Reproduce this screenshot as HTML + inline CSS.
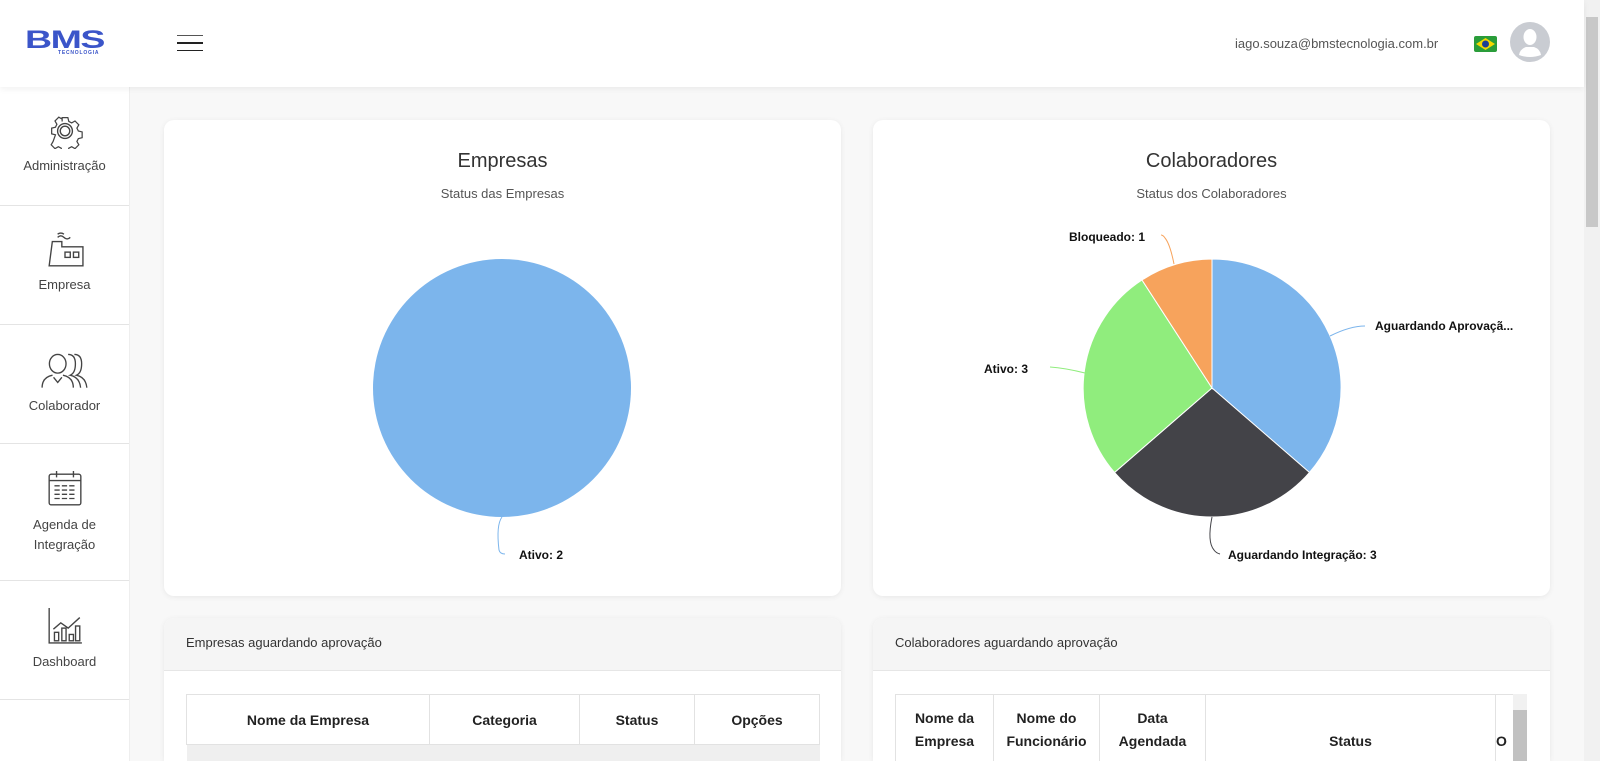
<!DOCTYPE html>
<html style="width:1600px;height:761px;overflow:hidden"><head><meta charset="utf-8"><style>
*{box-sizing:border-box;margin:0;padding:0}
body{width:1600px;height:761px;overflow:hidden;background:#f8f8f8;font-family:"Liberation Sans","DejaVu Sans",sans-serif;position:relative;color:#333}
.hdr{position:absolute;left:0;top:0;width:1584px;height:87px;background:#fff;box-shadow:0 2px 6px rgba(0,0,0,.06);z-index:2}
.side{position:absolute;left:0;top:87px;width:130px;height:674px;background:#fff;border-right:1px solid #eee}
.item{height:119px;border-bottom:1px solid #e4e4e4;text-align:center;font-size:13px;color:#444;padding-top:26px}
.item svg{display:block;margin:0 auto 9px}
.card{position:absolute;background:#fff;border-radius:10px;box-shadow:0 1px 6px rgba(0,0,0,.07)}
.t{position:absolute;width:100%;text-align:center}
.scroll{position:absolute;left:1584px;top:0;width:16px;height:761px;background:#f1f1f1}
.thumb{position:absolute;left:1586px;top:17px;width:12px;height:210px;background:#c8c8c8}
table{border-collapse:collapse;font-size:14px;font-weight:bold;color:#222}
td{border:1px solid #e2e2e2;text-align:center}
</style></head><body>
<div class="hdr">
 <div style="position:absolute;left:25px;top:26px;color:#3b55c9;font-weight:bold;font-size:25px;letter-spacing:-1px;transform:scaleX(1.5);transform-origin:left">BMS</div>
 <div style="position:absolute;left:58px;top:50px;color:#3b55c9;font-size:5px;font-weight:bold;letter-spacing:.8px">TECNOLOGIA</div>
 <div style="position:absolute;left:177px;top:35px;width:26px;height:1px;background:#555"></div>
 <div style="position:absolute;left:177px;top:42px;width:26px;height:2px;background:#222"></div>
 <div style="position:absolute;left:177px;top:50px;width:26px;height:1px;background:#222"></div>
 <div style="position:absolute;left:1235px;top:36px;font-size:13px;color:#555">iago.souza@bmstecnologia.com.br</div>
 <svg style="position:absolute;left:1474px;top:36px" width="23" height="16"><rect width="23" height="16" rx="2" fill="#2a9d3a"/><path d="M11.5 2 L21 8 L11.5 14 L2 8Z" fill="#f5d800"/><circle cx="11.5" cy="8" r="3.5" fill="#1c3f94"/></svg>
 <svg style="position:absolute;left:1510px;top:22px" width="40" height="40"><circle cx="20" cy="20" r="20" fill="#c9ccd2"/><path d="M13 12 Q13 6 20 6 Q27 6 27 12 L27 20 Q27 26 31 28 L33 36 Q20 40 7 36 L9 28 Q13 26 13 20Z" fill="#fff" opacity=".0"/><ellipse cx="20" cy="15" rx="6.5" ry="8" fill="#fff"/><path d="M9 33 Q10 27 16 25 L24 25 Q30 27 31 33 Q20 37 9 33Z" fill="#fff"/></svg>
</div>
<div class="side">
 <div class="item"><svg width="36" height="36" viewBox="0 0 34 34" fill="none" stroke="#444" stroke-width="1.3"><path d="M14 3h6l1 4 3 1.5 3.5-2 4 4-2 3.5 1.5 3 4 1v6l-4 1-1.5 3 2 3.5-4 4-3.5-2-3 1.5-1 4h-6l-1-4-3-1.5-3.5 2-4-4 2-3.5L7 21l-4-1v-6l4-1 1.5-3-2-3.5 4-4 3.5 2L14 7z" transform="translate(1.7,1.7) scale(.9)"/><circle cx="17" cy="17" r="7"/><circle cx="17" cy="17" r="4.5"/></svg>Administração</div>
 <div class="item"><svg width="38" height="36" viewBox="0 0 36 34" fill="none" stroke="#444" stroke-width="1.3"><path d="M3 32h32V14H15V9H6z"/><rect x="18" y="19" width="5" height="5"/><rect x="26" y="19" width="5" height="5"/><path d="M11 5q3-3 6 0t6 0M11 2q3-2 6 0"/></svg>Empresa</div>
 <div class="item"><svg width="52" height="38" viewBox="0 0 50 36" fill="none" stroke="#444" stroke-width="1.3"><path d="M10 12a8 9 0 1 1 16 0a8 9 0 1 1-16 0M3 35q0-10 10-12M33 35q0-10-10-12M14 25l4 5 4-5M28 3q7 0 7 9t-5 11q9 2 10 12M34 3q7 0 7 9t-5 11q9 2 10 12"/></svg>Colaborador</div>
 <div class="item" style="height:137px"><svg width="36" height="38" viewBox="0 0 34 36" fill="none" stroke="#444" stroke-width="1.3"><rect x="2" y="4" width="30" height="29" rx="2"/><path d="M9 1v6M25 1v6M2 10h30M7 15h5M14 15h5M21 15h5M7 19h5M14 19h5M21 19h5M7 23h5M14 23h5M21 23h5M7 27h5M14 27h5M21 27h5"/></svg>Agenda de<br><span style="line-height:26px">Integração</span></div>
 <div class="item"><svg width="36" height="38" viewBox="0 0 34 36" fill="none" stroke="#444" stroke-width="1.3"><path d="M2 1v33h31M6 21l7-6 7 5 11-10"/><rect x="7" y="24" width="4" height="8"/><rect x="14" y="20" width="4" height="12"/><rect x="21" y="26" width="4" height="6"/><rect x="27" y="18" width="4" height="14"/></svg>Dashboard</div>
</div>
<div class="card" style="left:164px;top:120px;width:677px;height:476px">
 <div class="t" style="top:30px;font-size:20px;color:#333">Empresas</div>
 <div class="t" style="top:66px;font-size:13px;color:#555">Status das Empresas</div>
</div>
<div class="card" style="left:873px;top:120px;width:677px;height:476px">
 <div class="t" style="top:30px;font-size:20px;color:#333">Colaboradores</div>
 <div class="t" style="top:66px;font-size:13px;color:#555">Status dos Colaboradores</div>
</div>
<svg style="position:absolute;left:0;top:0" width="1600" height="761" font-family="Liberation Sans,DejaVu Sans,sans-serif" font-size="12" font-weight="bold" fill="#111">
 <circle cx="502" cy="388" r="129" fill="#7cb5ec"/>
 <path d="M502 517q-6 8-3 33q1 4 6 4" fill="none" stroke="#7cb5ec"/>
 <text x="519" y="559">Ativo: 2</text>
 <g stroke="#fff" stroke-width="1">
 <path d="M1212 388V259A129 129 0 0 1 1309.5 472.5Z" fill="#7cb5ec"/>
 <path d="M1212 388L1309.5 472.5A129 129 0 0 1 1114.5 472.5Z" fill="#434348"/>
 <path d="M1212 388L1114.5 472.5A129 129 0 0 1 1142 280Z" fill="#90ed7d"/>
 <path d="M1212 388L1142 280A129 129 0 0 1 1212 259Z" fill="#f7a35c"/>
 </g>
 <path d="M1174 264q-4-20-9-26q-2-3-4-3" fill="none" stroke="#f7a35c"/>
 <path d="M1330 336q20-10 35-10" fill="none" stroke="#7cb5ec"/>
 <path d="M1085 373q-20-5-35-6" fill="none" stroke="#90ed7d"/>
 <path d="M1212 517q-5 25 2 33q2 3 6 4" fill="none" stroke="#434348"/>
 <text x="1069" y="241">Bloqueado: 1</text>
 <text x="1375" y="330">Aguardando Aprovaçã...</text>
 <text x="984" y="373">Ativo: 3</text>
 <text x="1228" y="559">Aguardando Integração: 3</text>
</svg>
<div class="card" style="left:164px;top:618px;width:677px;height:143px;overflow:hidden;border-radius:10px 10px 0 0">
 <div style="height:53px;background:#f5f5f5;border-bottom:1px solid #e6e6e6;font-size:13px;padding:17px 22px;color:#333">Empresas aguardando aprovação</div>
 <table style="position:absolute;left:22px;top:76px;width:634px"><tr style="height:50px"><td style="width:243px">Nome da Empresa</td><td style="width:150px">Categoria</td><td style="width:115px">Status</td><td>Opções</td></tr><tr style="height:30px;background:#efefef"><td colspan="4" style="border:none"></td></tr></table>
</div>
<div class="card" style="left:873px;top:618px;width:677px;height:143px;overflow:hidden;border-radius:10px 10px 0 0">
 <div style="height:53px;background:#f5f5f5;border-bottom:1px solid #e6e6e6;font-size:13px;padding:17px 22px;color:#333">Colaboradores aguardando aprovação</div>
 <table style="position:absolute;left:22px;top:76px;width:632px;line-height:23px"><tr style="height:80px"><td style="width:98px;vertical-align:top;padding-top:12px">Nome da<br>Empresa</td><td style="width:106px;vertical-align:top;padding-top:12px">Nome do<br>Funcionário</td><td style="width:106px;vertical-align:top;padding-top:12px">Data<br>Agendada</td><td style="width:290px;vertical-align:top;padding-top:35px">Status</td><td style="text-align:left;vertical-align:top;padding-top:35px">O</td></tr></table>
 <div style="position:absolute;left:640px;top:76px;width:14px;height:130px;background:#f1f1f1"><div style="margin-top:16px;height:114px;background:#c1c1c1"></div></div>
</div>
<div class="scroll"></div><div class="thumb"></div>
</body></html>
